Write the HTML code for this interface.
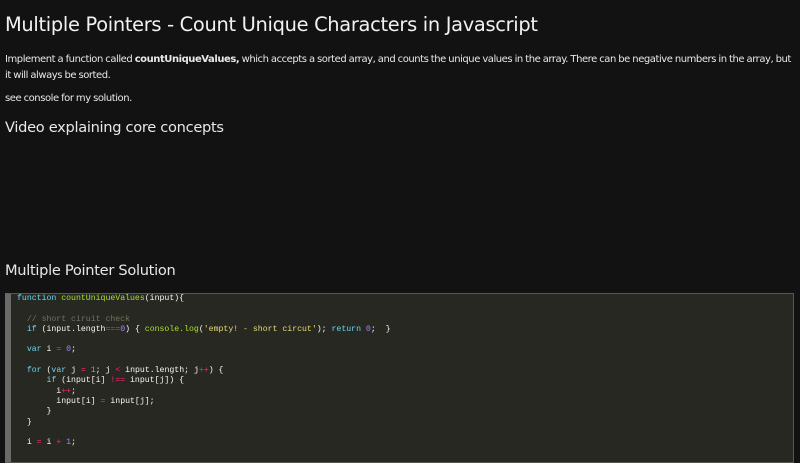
<!DOCTYPE html>
<html><head><style>
body{margin:0;background:#121212;color:#e8e8e8;font-family:"DejaVu Sans","Liberation Sans",sans-serif;width:800px;height:450px;overflow:hidden;position:relative}
h1{position:absolute;left:5px;top:13px;margin:0;font-weight:normal;font-size:19.4px;letter-spacing:-0.3px;color:#f2f2f2;white-space:nowrap}
p{position:absolute;left:5px;margin:0;font-size:10px;line-height:16px;width:800px;letter-spacing:-0.45px;word-spacing:-0.3px}
h2{position:absolute;left:5px;margin:0;font-weight:normal;font-size:14.6px;letter-spacing:-0.3px;white-space:nowrap}
.code{position:absolute;left:5px;top:293px;width:789px;height:170px;background:#272822;border:1px solid #555;border-left:6px solid #6a6a6a;box-sizing:border-box}
pre{margin:0;position:absolute;left:6px;top:0px;font-family:"Liberation Mono",monospace;font-size:8.2px;line-height:10.3px;color:#f8f8f2}
.k{color:#66d9ef}.s{color:#e6db74}.c{color:#75715e}.n{color:#ae81ff}.o{color:#f92672}.f{color:#a6e22e}
</style></head><body>
<h1>Multiple Pointers - Count Unique Characters in Javascript</h1>
<p style="top:52px">Implement a function called <b>countUniqueValues,</b> which accepts a sorted array, and counts the unique values in the array. There can be negative numbers in the array, but<br>it will always be sorted.</p>
<p style="top:91px">see console for my solution.</p>
<h2 style="top:119px">Video explaining core concepts</h2>
<h2 style="top:262px">Multiple Pointer Solution</h2>
<div class="code"><pre><span class="k">function</span> <span class="f">countUniqueValues</span>(input){

  <span class="c">// short ciruit check</span>
  <span class="k">if</span> (input.length<span class="o">===</span><span class="n">0</span>) { <span class="f">console.log</span>(<span class="s">'empty! - short circut'</span>); <span class="k">return</span> <span class="n">0</span>;  }

  <span class="k">var</span> i <span class="o">=</span> <span class="n">0</span>;

  <span class="k">for</span> (<span class="k">var</span> j <span class="o">=</span> <span class="n">1</span>; j <span class="o">&lt;</span> input.length; j<span class="o">++</span>) {
      <span class="k">if</span> (input[i] <span class="o">!==</span> input[j]) {
        i<span class="o">++</span>;
        input[i] <span class="o">=</span> input[j];
      }
  }

  i <span class="o">=</span> i <span class="o">+</span> <span class="n">1</span>;
</pre></div>
</body></html>
